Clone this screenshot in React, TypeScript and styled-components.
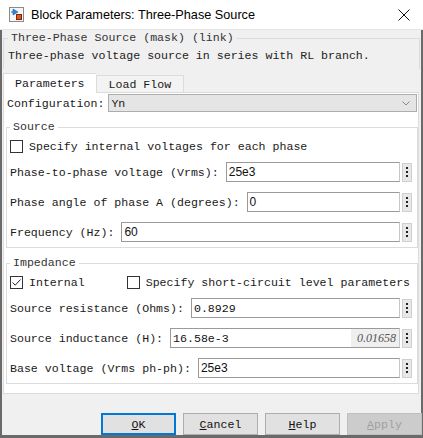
import React from "react";
import styled, { createGlobalStyle } from "styled-components";

const mono = `"Liberation Mono", "DejaVu Sans Mono", monospace`;

const GlobalStyle = createGlobalStyle`
  html, body {
    margin: 0;
    padding: 0;
    background: #f0f0f0;
  }
  * {
    box-sizing: border-box;
  }
`;

const Window = styled.div`
  width: 423px;
  height: 438px;
  display: flex;
  flex-direction: column;
  overflow: hidden;
  font-family: ${mono};
  font-size: 11.6px;
  color: #1a1a1a;
`;

const TitleBar = styled.div`
  height: 30px;
  flex-shrink: 0;
  background: #ffffff;
  display: flex;
  align-items: center;
  padding: 0 13px 0 9px;
  border-bottom: 1px solid #e6e6e6;
`;

const TitleText = styled.span`
  flex: 1;
  margin-left: 7px;
  font-family: "Liberation Sans", Arial, sans-serif;
  font-size: 12.7px;
  color: #000;
`;

const Body = styled.div`
  flex: 1;
  display: flex;
  flex-direction: column;
  background: #f0f0f0;
  border-left: 2px solid #6a6a6a;
  border-right: 2px solid #6a6a6a;
  border-bottom: 3px solid #6a6a6a;
  padding: 0 0 0 1px;
`;

const Group = styled.fieldset<{ $bottom?: boolean }>`
  margin: 0;
  padding: 0 2px;
  border: 1px solid #dcdcdc;
  border-bottom: ${(p) => (p.$bottom ? "1px solid #dcdcdc" : "none")};
  min-width: 0;
`;

const Legend = styled.legend`
  padding: 0 3px;
  margin-left: 0;
  line-height: 14px;
  color: #333;
`;

const MaskGroup = styled(Group)`
  margin-top: 1px;
  margin-right: 1px;
  padding: 4px 4px 6px 4px;
`;

const Description = styled.div`
  line-height: 14px;
  color: #222;
`;

const TabStrip = styled.div`
  display: flex;
  align-items: flex-end;
  height: 19px;
  margin-top: 4px;
`;

const Tab = styled.div<{ $active?: boolean }>`
  height: ${(p) => (p.$active ? "20px" : "17px")};
  padding: 0 ${(p) => (p.$active ? "11px" : "12px")};
  display: flex;
  align-items: center;
  background: ${(p) => (p.$active ? "#ffffff" : "#f3f3f3")};
  border: 1px solid #dcdcdc;
  border-bottom: none;
  border-right: ${(p) => (p.$active ? "none" : "1px solid #dcdcdc")};
  margin-bottom: ${(p) => (p.$active ? "-1px" : "0")};
  position: relative;
  z-index: ${(p) => (p.$active ? 1 : 0)};
`;

const Panel = styled.div`
  height: 302px;
  margin-right: 2px;
  background: #ffffff;
  border: 1px solid #dcdcdc;
  padding: 1px 0 0 3px;
  display: flex;
  flex-direction: column;
`;

const ConfigRow = styled.div`
  display: flex;
  align-items: center;
  height: 18px;
  margin-right: 1px;
`;

const Select = styled.div`
  flex: 1;
  height: 18px;
  margin-left: 4px;
  display: flex;
  align-items: center;
  justify-content: space-between;
  padding: 0 6px 0 2px;
  background: #e5e5e5;
  border: 1px solid #adadad;
`;

const Section = styled(Group)`
  margin: 8px 0 0 -1px;
  padding: 3px 5px 5px 3px;
  border-bottom: 1px solid #dcdcdc;
  display: flex;
  flex-direction: column;
`;

const CheckRow = styled.div`
  display: flex;
  align-items: center;
  height: 18px;
`;

const CheckItem = styled.label<{ $gap?: number }>`
  display: flex;
  align-items: center;
  gap: 6px;
  margin-right: ${(p) => p.$gap ?? 0}px;
  white-space: nowrap;
`;

const Box = styled.span`
  width: 13px;
  height: 13px;
  border: 1px solid #333;
  background: #fff;
  display: flex;
  align-items: center;
  justify-content: center;
`;

const FieldRow = styled.div<{ $top: number }>`
  display: flex;
  align-items: center;
  height: 20px;
  margin-top: ${(p) => p.$top}px;
`;

const Label = styled.span`
  white-space: nowrap;
  margin-right: 7px;
`;

const Input = styled.div`
  flex: 1;
  height: 20px;
  display: flex;
  align-items: center;
  background: #fff;
  border: 1px solid #9a9a9a;
  border-right-color: #c8c8c8;
  overflow: hidden;
`;

const Value = styled.span<{ $sans?: boolean }>`
  flex: 1;
  padding-left: 2px;
  font-family: ${(p) =>
    p.$sans ? `"Liberation Sans", Arial, sans-serif` : mono};
  font-size: ${(p) => (p.$sans ? "12px" : "11.6px")};
  color: #111;
`;

const Hint = styled.span`
  height: 100%;
  display: flex;
  align-items: center;
  padding: 0 3px 0 6px;
  background: #efefef;
  font-family: "Liberation Serif", "Times New Roman", serif;
  font-style: italic;
  font-size: 12px;
  color: #555;
`;

const DotsButton = styled.div`
  width: 10px;
  height: 19px;
  margin-left: 2px;
  background: #e8e8e8;
  border: 1px solid #cfcfcf;
  display: flex;
  flex-direction: column;
  align-items: center;
  justify-content: center;
  gap: 2px;
`;

const Dot = styled.span`
  width: 2px;
  height: 2px;
  background: #222;
`;

const ButtonBar = styled.div`
  flex: 1;
  display: flex;
  justify-content: flex-end;
  align-items: flex-end;
  gap: 7px;
  margin-right: -1px;
`;

const Button = styled.div<{ $primary?: boolean; $disabled?: boolean }>`
  width: 75px;
  height: 22px;
  display: flex;
  align-items: center;
  justify-content: center;
  background: ${(p) => (p.$disabled ? "#cccccc" : "#e1e1e1")};
  border: ${(p) =>
    p.$primary
      ? "2px solid #0078d7"
      : p.$disabled
      ? "1px solid #bfbfbf"
      : "1px solid #adadad"};
  color: ${(p) => (p.$disabled ? "#a0a0a0" : "#111")};
  u {
    text-decoration: underline;
  }
`;

function BlockIcon() {
  return (
    <svg width="15" height="15" viewBox="0 0 15 15">
      <rect x="0.5" y="0.5" width="14" height="14" fill="#f6f6f6" stroke="#8a8a8a" />
      <path d="M2 5 H4" stroke="#1a6fc4" strokeWidth="1" />
      <path d="M4 2 L9 5 L4 8 Z" fill="#2a8ae0" stroke="#1a5fa8" strokeWidth="0.6" />
      <rect x="7.5" y="7.5" width="5" height="5" fill="#e2571e" stroke="#7a2a0a" />
    </svg>
  );
}

function CloseIcon() {
  return (
    <svg width="12" height="12" viewBox="0 0 12 12">
      <path d="M0.5 0.5 L11.5 11.5 M11.5 0.5 L0.5 11.5" stroke="#111" strokeWidth="1" />
    </svg>
  );
}

function Chevron() {
  return (
    <svg width="8" height="5" viewBox="0 0 8 5">
      <path d="M0.5 0.5 L4 4 L7.5 0.5" fill="none" stroke="#888" strokeWidth="1" />
    </svg>
  );
}

function CheckBox({ checked }: { checked?: boolean }) {
  return (
    <Box>
      {checked && (
        <svg width="11" height="11" viewBox="0 0 11 11">
          <path d="M1.5 5.5 L4.2 8.2 L9.5 2.5" fill="none" stroke="#222" strokeWidth="1" />
        </svg>
      )}
    </Box>
  );
}

interface IFieldProps {
  label: string;
  value: string;
  top: number;
  sans?: boolean;
  hint?: string;
}

function Field({ label, value, top, sans, hint }: IFieldProps) {
  return (
    <FieldRow $top={top}>
      <Label>{label}</Label>
      <Input>
        <Value $sans={sans}>{value}</Value>
        {hint && <Hint>{hint}</Hint>}
      </Input>
      <DotsButton>
        <Dot />
        <Dot />
        <Dot />
      </DotsButton>
    </FieldRow>
  );
}

export default function App() {
  return (
    <>
      <GlobalStyle />
      <Window>
        <TitleBar>
          <BlockIcon />
          <TitleText>Block Parameters: Three-Phase Source</TitleText>
          <CloseIcon />
        </TitleBar>
        <Body>
          <MaskGroup>
            <Legend>Three-Phase Source (mask) (link)</Legend>
            <Description>
              Three-phase voltage source in series with RL branch.
            </Description>
          </MaskGroup>
          <TabStrip>
            <Tab $active>Parameters</Tab>
            <Tab>Load Flow</Tab>
          </TabStrip>
          <Panel>
            <ConfigRow>
              <span>Configuration:</span>
              <Select>
                <span>Yn</span>
                <Chevron />
              </Select>
            </ConfigRow>
            <Section>
              <Legend>Source</Legend>
              <CheckRow>
                <CheckItem>
                  <CheckBox />
                  Specify internal voltages for each phase
                </CheckItem>
              </CheckRow>
              <Field label="Phase-to-phase voltage (Vrms):" value="25e3" sans top={7} />
              <Field label="Phase angle of phase A (degrees):" value="0" sans top={10} />
              <Field label="Frequency (Hz):" value="60" sans top={10} />
            </Section>
            <Section>
              <Legend>Impedance</Legend>
              <CheckRow>
                <CheckItem $gap={42}>
                  <CheckBox checked />
                  Internal
                </CheckItem>
                <CheckItem>
                  <CheckBox />
                  Specify short-circuit level parameters
                </CheckItem>
              </CheckRow>
              <Field label="Source resistance (Ohms):" value="0.8929" top={7} />
              <Field label="Source inductance (H):" value="16.58e-3" hint="0.01658" top={10} />
              <Field label="Base voltage (Vrms ph-ph):" value="25e3" sans top={10} />
            </Section>
          </Panel>
          <ButtonBar>
            <Button $primary>
              <u>O</u>K
            </Button>
            <Button>
              <u>C</u>ancel
            </Button>
            <Button>
              <u>H</u>elp
            </Button>
            <Button $disabled>
              <u>A</u>pply
            </Button>
          </ButtonBar>
        </Body>
      </Window>
    </>
  );
}
